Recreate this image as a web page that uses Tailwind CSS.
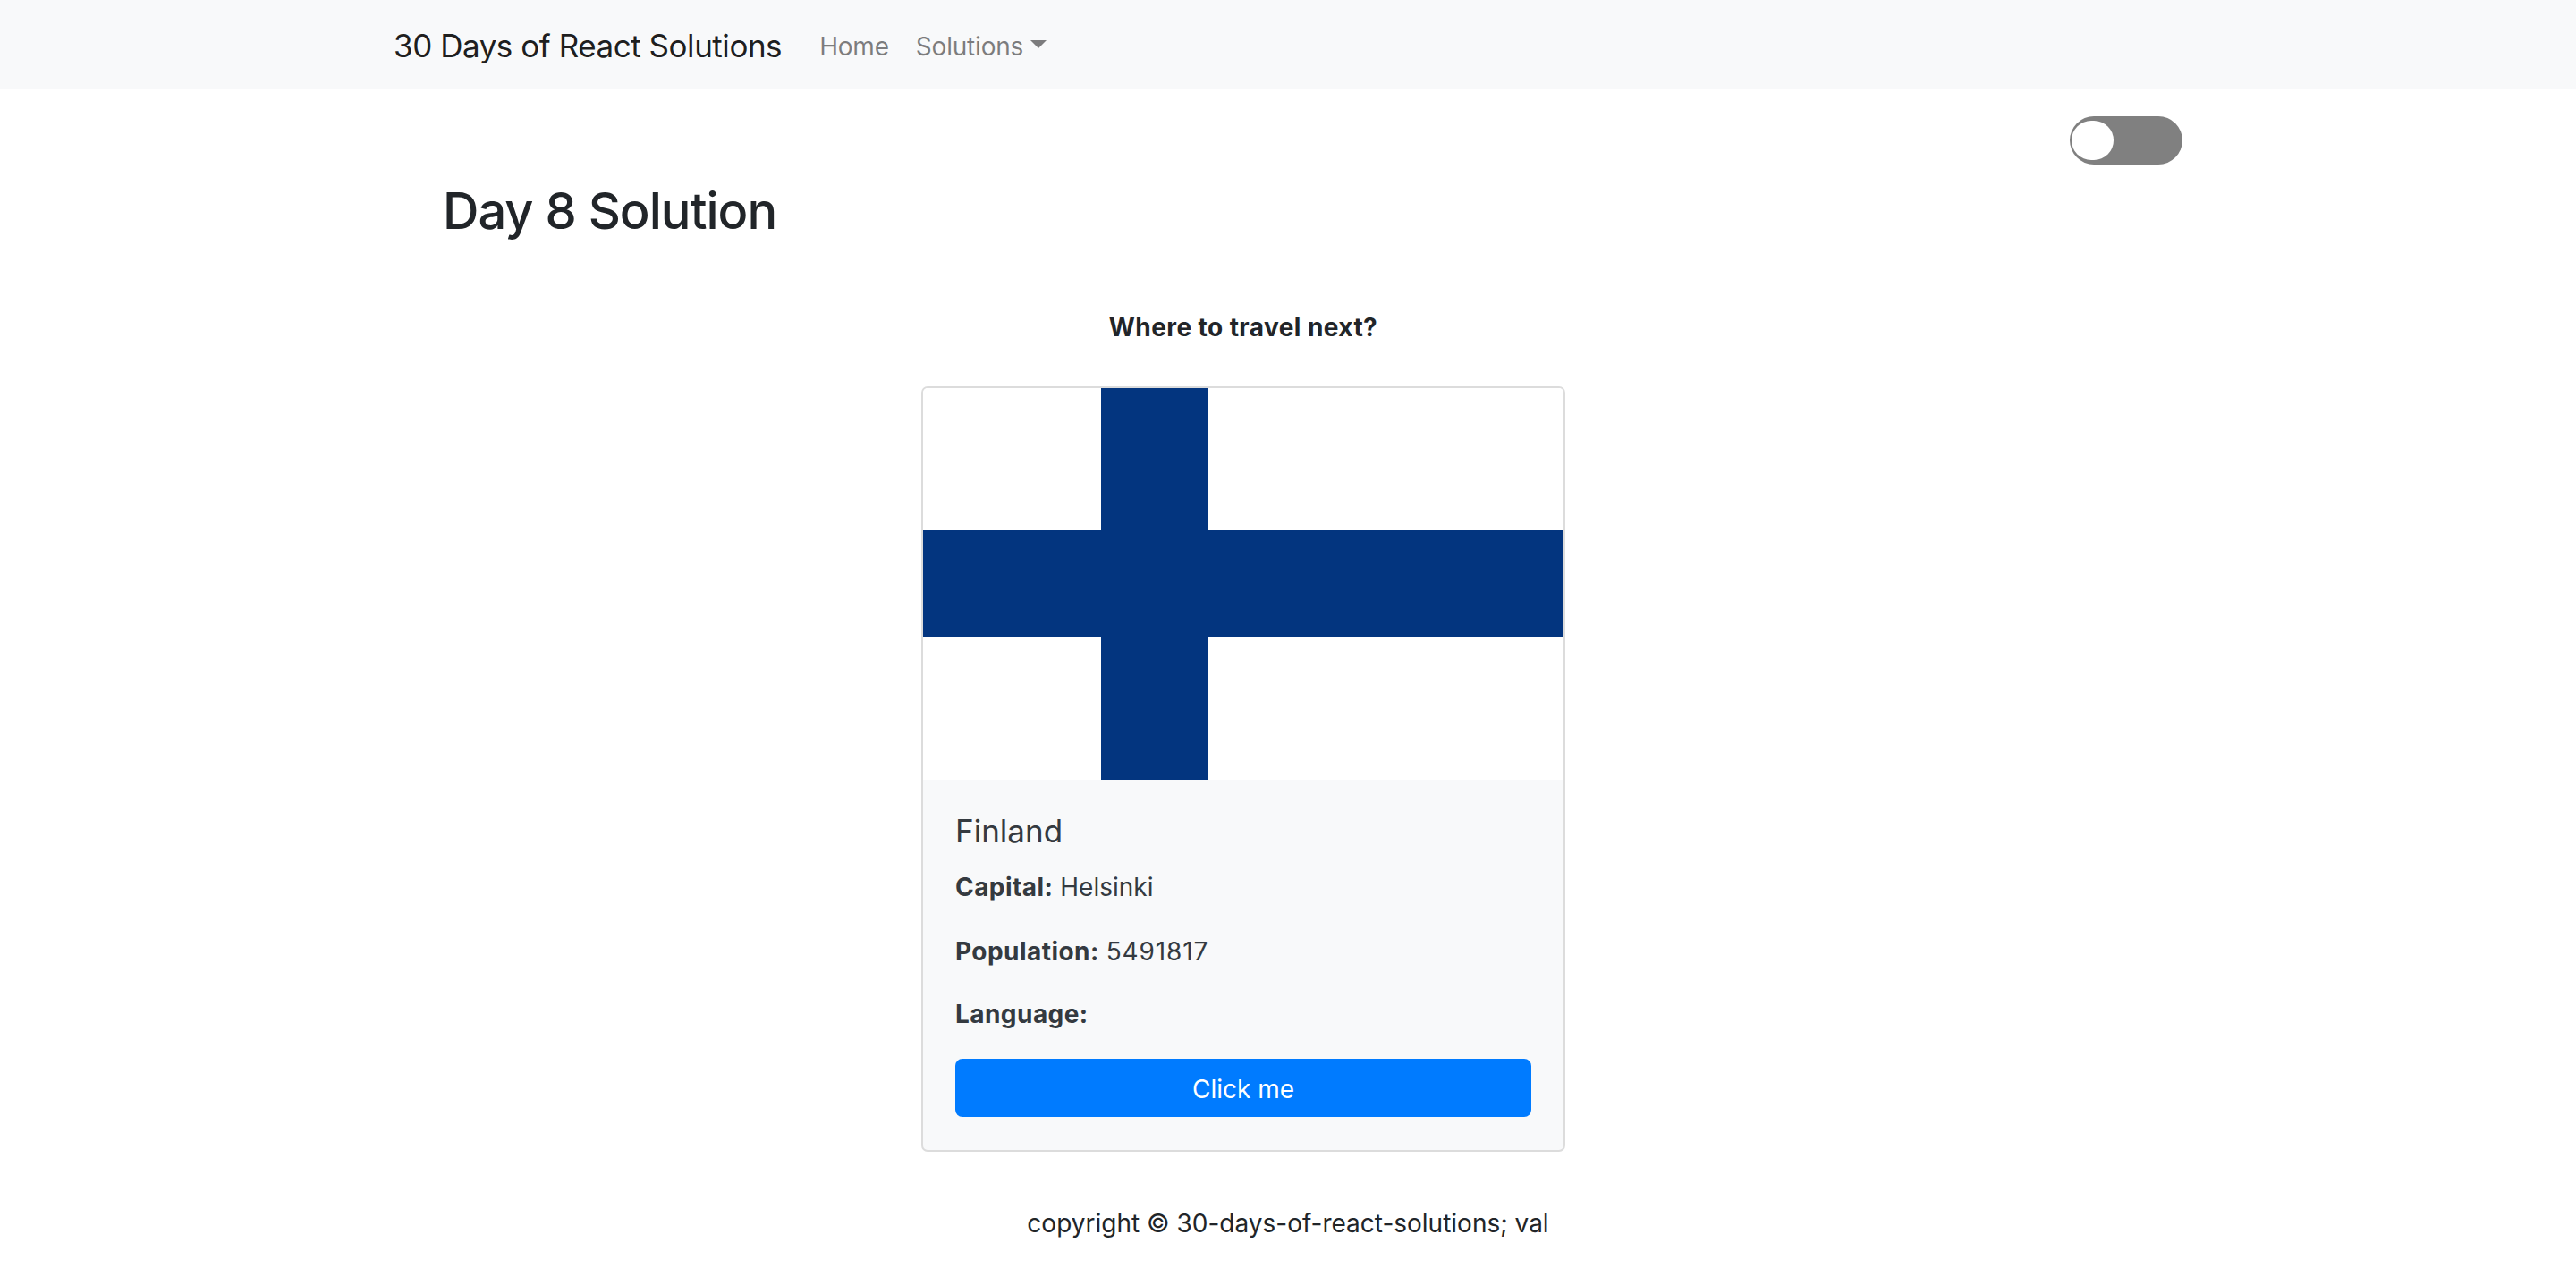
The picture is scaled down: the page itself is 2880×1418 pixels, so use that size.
<!DOCTYPE html>
<html lang="en">
<head>
    <meta charset="UTF-8">
    <meta name="viewport" content="width=device-width, initial-scale=1.0">
    <title>Day 8 Solution</title>
    <script src="https://cdn.jsdelivr.net/npm/@tailwindcss/browser@4"></script>
</head>
<body class="bg-white text-[#212529] font-['Inter',sans-serif] text-[28px] h-[1418px] overflow-hidden">

    <!-- Navbar -->
    <nav class="bg-[#f8f9fa] h-[100px] pl-[440px] pt-[3px] flex items-center">
        <a class="text-[35px] tracking-[-0.46px] text-black/90 mr-[42px]">30 Days of React Solutions</a>
        <a class="tracking-[-0.2px] text-black/50 mr-[30px]">Home</a>
        <a class="tracking-[-0.2px] text-black/50 flex items-center">
            Solutions
            <span class="ml-[8px] mt-[-5px] border-t-[9px] border-x-[9px] border-t-black/50 border-x-transparent"></span>
        </a>
    </nav>

    <!-- Toggle -->
    <div class="flex justify-end pr-[440px] pt-[30px]">
        <div class="w-[126px] h-[54px] rounded-[27px] bg-[#808080] flex items-center pl-[2px]">
            <div class="w-[47px] h-[44px] rounded-[22px] bg-white"></div>
        </div>
    </div>

    <h1 class="ml-[495px] mt-[19px] text-[56px] tracking-[-1px] leading-[67px] font-medium">Day 8 Solution</h1>

    <!-- Card column -->
    <div class="w-[720px] ml-[1030px]">
        <p class="mt-[75px] text-center font-bold tracking-[0.43px]">Where to travel next?</p>

        <div class="mt-[45px] border-2 border-[#dcdcdc] rounded-[7px] overflow-hidden bg-[#f8f9fa]">
            <svg class="block w-full h-[438px]" viewBox="0 0 716 438">
                <rect width="716" height="438" fill="#fff"/>
                <rect x="199" width="119" height="438" fill="#03357f"/>
                <rect y="159" width="716" height="119" fill="#03357f"/>
            </svg>
            <div class="px-[36px] pt-[36px] pb-[37px] text-[#343a40]">
                <h5 class="text-[35px] leading-[42px] mb-[21px]">Finland</h5>
                <p class="leading-[42px] mb-[30px]"><b class="font-bold tracking-[0.45px]">Capital:</b> Helsinki</p>
                <p class="leading-[42px] mb-[28px]"><b class="font-bold tracking-[0.45px]">Population:</b> <span class="tracking-[0.9px]">5491817</span></p>
                <p class="leading-[42px] mb-[29px]"><b class="font-bold tracking-[0.45px]">Language:</b></p>
                <button class="w-full h-[65px] pt-[2px] rounded-[8px] bg-[#007bff] text-white">Click me</button>
            </div>
        </div>
    </div>

    <footer class="mt-[59px] text-center">copyright © 30-days-of-react-solutions; val</footer>

</body>
</html>
